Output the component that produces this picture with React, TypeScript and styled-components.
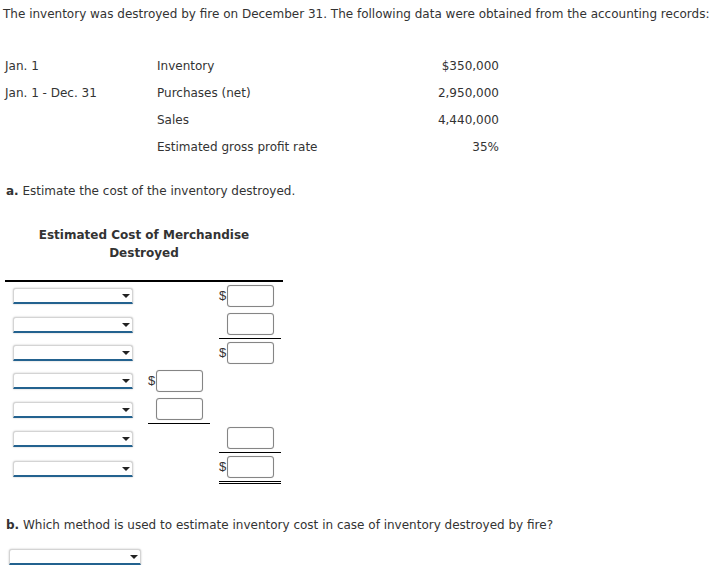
import React from "react";
import styled, { createGlobalStyle } from "styled-components";

const Global = createGlobalStyle`
  html, body { margin: 0; padding: 0; background: #fff; }
  body {
    font-family: "DejaVu Sans", Verdana, sans-serif;
    font-size: 12px;
    color: #333;
  }
`;

const Page = styled.div`
  padding: 5px 0 0 0;
  width: 720px;
`;

const Intro = styled.p`
  margin: 0 0 0 3px;
  line-height: 18px;
  white-space: nowrap;
`;

const DataTable = styled.div`
  display: grid;
  grid-template-columns: 152px 200px 142px;
  grid-auto-rows: 27px;
  margin: 29px 0 0 5px;
  align-items: center;
`;

const Cell = styled.div<{ $right?: boolean }>`
  text-align: ${(p) => (p.$right ? "right" : "left")};
  line-height: 18px;
  white-space: nowrap;
`;

const Question = styled.p<{ $top: number }>`
  margin: ${(p) => p.$top}px 0 0 6px;
  line-height: 18px;
  white-space: nowrap;
`;

const Letter = styled.b`
  font-weight: bold;
`;

const Heading = styled.h3`
  margin: 26px 0 0 5px;
  width: 278px;
  text-align: center;
  font-size: 12px;
  font-weight: bold;
  line-height: 18px;
  color: #333;
`;

const Worksheet = styled.div`
  margin: 18px 0 0 5px;
  width: 278px;
  border-top: 2px solid #000;
`;

const Row = styled.div`
  display: grid;
  grid-template-columns: 143px 62px 9px 62px 2px;
`;

const SelectCell = styled.div`
  display: flex;
  align-items: center;
  padding-left: 8px;
`;

const AmountCell = styled.div<{ $line?: "single" | "double" }>`
  display: flex;
  align-items: center;
  padding: 3px 0;
  min-height: 22px;
  border-bottom: ${(p) =>
    p.$line === "double"
      ? "3px double #000"
      : p.$line === "single"
      ? "1px solid #000"
      : "none"};
`;

const Dollar = styled.span`
  display: inline-block;
  width: 8px;
  font-family: "Liberation Sans", Arial, sans-serif;
  font-size: 13px;
  color: #333;
  line-height: 22px;
`;

const Input = styled.input`
  box-sizing: border-box;
  width: 47px;
  height: 22px;
  margin: 0;
  padding: 0 3px;
  border: 1px solid #858585;
  border-radius: 3px;
  box-shadow: inset 0 0 1px rgba(0, 0, 0, 0.25), 0 0 1px rgba(0, 0, 0, 0.2);
  background: #fff;
  font: inherit;
`;

const SelectWrap = styled.div<{ $width: number }>`
  position: relative;
  width: ${(p) => p.$width}px;
  height: 16px;
`;

const Select = styled.select`
  appearance: none;
  -webkit-appearance: none;
  box-sizing: border-box;
  width: 100%;
  height: 100%;
  margin: 0;
  padding: 0 12px 0 4px;
  border: 1px solid #d4d4d4;
  border-radius: 3px 3px 0 0;
  border-bottom: 2px solid #23628f;
  box-shadow: 0 0 2px 0 #bdbdbd;
  background: #fff;
  font: inherit;
  font-size: 11px;
`;

const Arrow = styled.svg`
  position: absolute;
  right: 3px;
  top: 6px;
  pointer-events: none;
`;

const Dropdown = ({ width }: { width: number }) => (
  <SelectWrap $width={width}>
    <Select defaultValue="">
      <option value=""></option>
    </Select>
    <Arrow width="8" height="4" viewBox="0 0 8 4">
      <path d="M0 0 H8 L4 4 Z" fill="#222" />
    </Arrow>
  </SelectWrap>
);

type Amt = { dollar?: boolean; line?: "single" | "double" } | null;

const rows: { mid: Amt; right: Amt }[] = [
  { mid: null, right: { dollar: true } },
  { mid: null, right: { line: "single" } },
  { mid: null, right: { dollar: true } },
  { mid: { dollar: true }, right: null },
  { mid: { line: "single" }, right: null },
  { mid: null, right: { line: "single" } },
  { mid: null, right: { dollar: true, line: "double" } },
];

const Amount = ({ a }: { a: Amt }) =>
  a ? (
    <AmountCell $line={a.line}>
      <Dollar>{a.dollar ? "$" : ""}</Dollar>
      <Input type="text" />
    </AmountCell>
  ) : (
    <AmountCell />
  );

const data = [
  ["Jan. 1", "Inventory", "$350,000"],
  ["Jan. 1 - Dec. 31", "Purchases (net)", "2,950,000"],
  ["", "Sales", "4,440,000"],
  ["", "Estimated gross profit rate", "35%"],
];

const BottomSelect = styled.div`
  margin: 15px 0 0 9px;
`;

export default function App() {
  return (
    <Page>
      <Global />
      <Intro>
        The inventory was destroyed by fire on December 31. The following data were
        obtained from the accounting records:
      </Intro>
      <DataTable>
        {data.map((r, i) => (
          <React.Fragment key={i}>
            <Cell>{r[0]}</Cell>
            <Cell>{r[1]}</Cell>
            <Cell $right>{r[2]}</Cell>
          </React.Fragment>
        ))}
      </DataTable>
      <Question $top={22}>
        <Letter>a.</Letter> Estimate the cost of the inventory destroyed.
      </Question>
      <Heading>
        Estimated Cost of Merchandise
        <br />
        Destroyed
      </Heading>
      <Worksheet>
        {rows.map((r, i) => (
          <Row key={i}>
            <SelectCell>
              <Dropdown width={120} />
            </SelectCell>
            <Amount a={r.mid} />
            <div />
            <Amount a={r.right} />
            <div />
          </Row>
        ))}
      </Worksheet>
      <Question $top={32}>
        <Letter>b.</Letter> Which method is used to estimate inventory cost in case of
        inventory destroyed by fire?
      </Question>
      <BottomSelect>
        <Dropdown width={132} />
      </BottomSelect>
    </Page>
  );
}
